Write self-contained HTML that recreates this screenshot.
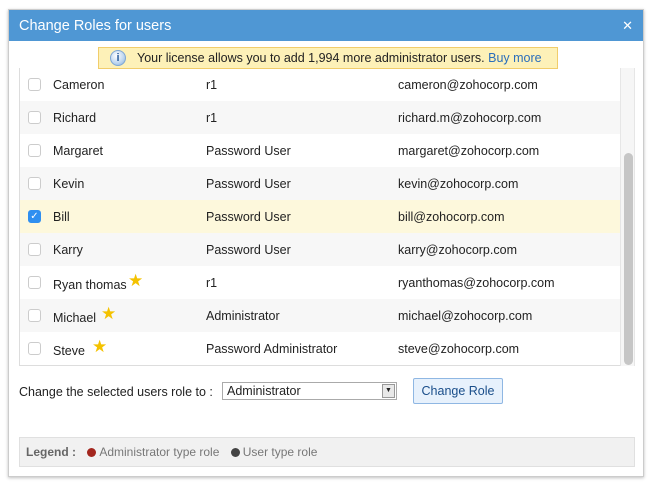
<!DOCTYPE html>
<html><head><style>
*{box-sizing:border-box;margin:0;padding:0}
body{width:652px;height:485px;background:#fff;font-family:"Liberation Sans","DejaVu Sans",sans-serif;font-size:12.5px;color:#222;position:relative;overflow:hidden}
.dlg{position:absolute;left:8px;top:9px;width:636px;height:468px;border:1px solid #ccc;box-shadow:0 1px 3px rgba(0,0,0,.25);background:#fff}
.hd{position:absolute;left:0;top:0;right:0;height:31px;background:#4f97d4;color:#fff;font-size:14.5px;line-height:32px;padding-left:10px}
.x{position:absolute;right:10px;top:0;font-weight:bold;font-size:13px}
.lic{position:absolute;left:89px;top:37px;width:460px;height:22px;background:#fdf1b8;border:1px solid #f1cd6b;line-height:21px;font-size:12.5px;padding-left:38px;z-index:2}
.lic .i{position:absolute;left:11px;top:2px;width:16px;height:16px;border-radius:50%;background:radial-gradient(circle at 40% 35%,#fff,#bcd5ef 60%,#7ea7d4);border:1px solid #7ea7d4;color:#2a5e9c;font-size:11px;font-weight:bold;line-height:14px;text-align:center}
.lic a{color:#2a6ebb;text-decoration:none}
.tbl{position:absolute;left:10px;top:58px;width:601px;height:298px;border-left:1px solid #ddd;border-bottom:1px solid #ddd;overflow:hidden}
.row{position:absolute;left:0;width:600px;height:33px}
.row.g{background:#f7f7f7}.row.s{background:#fdf8dc}
.row span{position:absolute;top:10px}
.cb{position:absolute;left:8px;top:10px;width:13px;height:13px;border:1px solid #ccc;border-radius:3px;background:#fff}
.cb.on{background:#2f8ff0;border-color:#2f8ff0;color:#fff;font-size:10px;line-height:11px;text-align:center}
.st{color:#f4c200;font-size:17px;top:5px!important}
.sb{position:absolute;left:611px;top:58px;width:15px;height:298px;background:#f6f6f6;border-left:1px solid #e6e6e6;border-right:1px solid #e6e6e6}
.th{position:absolute;left:3px;top:85px;width:9px;height:212px;background:#c6c6c6;border-radius:5px}
.lbl{position:absolute;left:10px;top:375px}
.sel{position:absolute;left:213px;top:372px;width:175px;height:18px;border:1px solid #aaa;background:#fff;padding-left:4px;line-height:17px}
.sel b{position:absolute;right:1px;top:1px;width:13px;height:14px;background:#e8e8e8;border:1px solid #999;font-size:7px;line-height:12px;text-align:center;font-weight:normal}
.btn{position:absolute;left:404px;top:368px;width:90px;height:26px;border:1px solid #8fb7e3;background:#e7f1fc;border-radius:2px;text-align:center;line-height:25px;color:#1a4e8a}
.leg{position:absolute;left:10px;top:427px;width:616px;height:30px;background:#f1f1f1;border:1px solid #e0e0e0;line-height:29px;padding-left:6px;color:#777;font-size:12px}
.leg b{color:#666}
.dot{display:inline-block;width:9px;height:9px;border-radius:50%;vertical-align:-1px;margin:0 3px 0 8px}
</style></head><body>
<div class="dlg">
<div class="hd">Change Roles for users<span class="x">✕</span></div>
<div class="lic"><span class="i">i</span>Your license allows you to add 1,994 more administrator users. <a>Buy more</a></div>
<div class="tbl">
<div class="row" style="top:0"><i class="cb"></i><span style="left:33px">Cameron</span><span style="left:186px">r1</span><span style="left:378px">cameron@zohocorp.com</span></div>
<div class="row g" style="top:33px"><i class="cb"></i><span style="left:33px">Richard</span><span style="left:186px">r1</span><span style="left:378px">richard.m@zohocorp.com</span></div>
<div class="row" style="top:66px"><i class="cb"></i><span style="left:33px">Margaret</span><span style="left:186px">Password User</span><span style="left:378px">margaret@zohocorp.com</span></div>
<div class="row g" style="top:99px"><i class="cb"></i><span style="left:33px">Kevin</span><span style="left:186px">Password User</span><span style="left:378px">kevin@zohocorp.com</span></div>
<div class="row s" style="top:132px"><i class="cb on">✓</i><span style="left:33px">Bill</span><span style="left:186px">Password User</span><span style="left:378px">bill@zohocorp.com</span></div>
<div class="row g" style="top:165px"><i class="cb"></i><span style="left:33px">Karry</span><span style="left:186px">Password User</span><span style="left:378px">karry@zohocorp.com</span></div>
<div class="row" style="top:198px"><i class="cb"></i><span style="left:33px;top:12px">Ryan thomas</span><span class="st" style="left:108px">★</span><span style="left:186px">r1</span><span style="left:378px">ryanthomas@zohocorp.com</span></div>
<div class="row g" style="top:231px"><i class="cb"></i><span style="left:33px;top:12px">Michael</span><span class="st" style="left:81px">★</span><span style="left:186px">Administrator</span><span style="left:378px">michael@zohocorp.com</span></div>
<div class="row" style="top:264px"><i class="cb"></i><span style="left:33px;top:12px">Steve</span><span class="st" style="left:72px">★</span><span style="left:186px">Password Administrator</span><span style="left:378px">steve@zohocorp.com</span></div>
</div>
<div class="sb"><div class="th"></div></div>
<div class="lbl">Change the selected users role to :</div>
<div class="sel">Administrator<b>▼</b></div>
<div class="btn">Change Role</div>
<div class="leg"><b>Legend :</b> <i class="dot" style="background:#a3261e"></i>Administrator type role <i class="dot" style="background:#444"></i>User type role</div>
</div>
</body></html>
